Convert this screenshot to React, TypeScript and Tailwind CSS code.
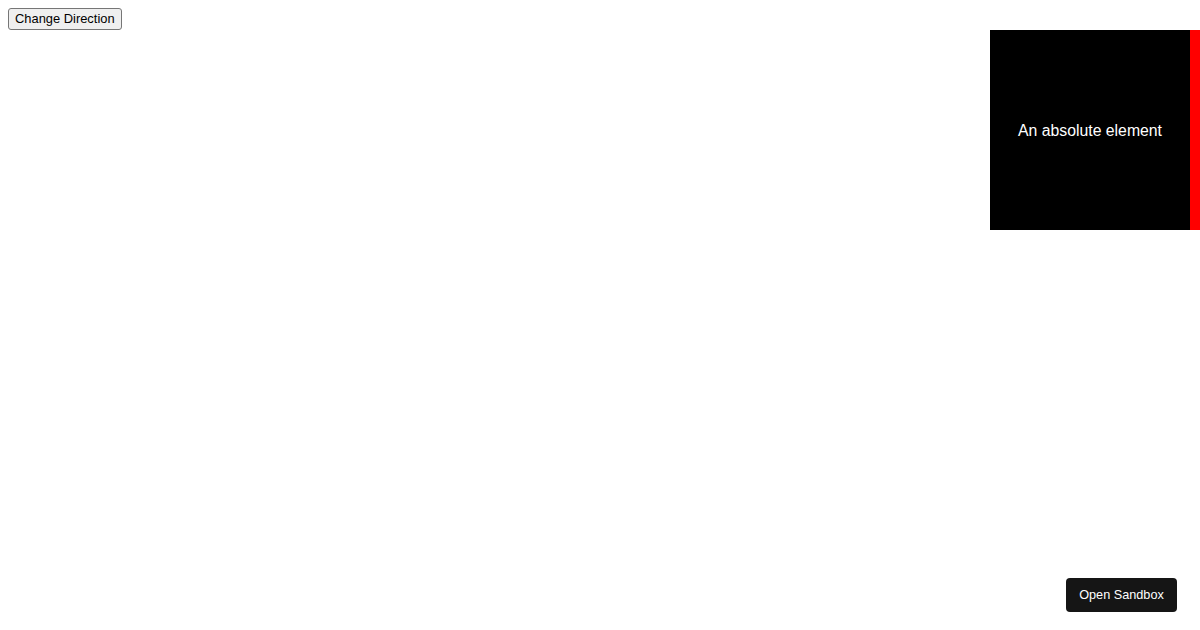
import React, { useState } from 'react';

export default function App() {
  const [dir, setDir] = useState<'ltr' | 'rtl'>('ltr');

  return (
    <div className="relative min-h-[630px] bg-white font-['Liberation_Sans',Arial,sans-serif]">
      <button
        onClick={() => setDir(dir === 'ltr' ? 'rtl' : 'ltr')}
        className="m-2 h-[22px] px-[6px] pb-px bg-[#efefef] border border-[#767676] rounded-[3px] text-[12.9px] leading-[15px] text-black"
      >
        Change Direction
      </button>

      {/* absolute element */}
      <div className="absolute top-[30px] right-0 flex">
        <div className="w-[200px] h-[200px] pt-[2px] bg-black flex items-center justify-center text-white text-[15.8px]">
          An absolute element
        </div>
        <div className="w-[10px] h-[200px] bg-[#ff0000]" />
      </div>

      <button className="fixed right-[23px] bottom-[18px] w-[111px] h-[34px] bg-[#151515] rounded-[4px] text-white text-[12.7px] leading-none">
        Open Sandbox
      </button>
    </div>
  );
}
